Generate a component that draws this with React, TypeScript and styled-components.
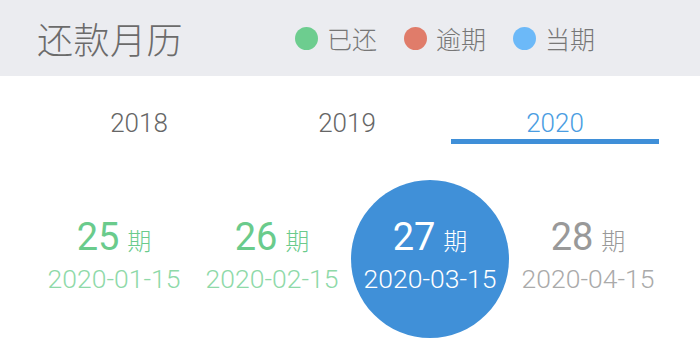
import { createGlobalStyle } from 'styled-components';
import styled from 'styled-components';

type Status = 'paid' | 'overdue' | 'current' | 'future';

const LEGEND: { label: string; color: string }[] = [
  { label: '已还', color: '#6dcd8f' },
  { label: '逾期', color: '#e07c6a' },
  { label: '当期', color: '#6cb9f8' },
];

const YEARS = ['2018', '2019', '2020'];

const TERMS: { term: number; date: string; status: Status }[] = [
  { term: 25, date: '2020-01-15', status: 'paid' },
  { term: 26, date: '2020-02-15', status: 'paid' },
  { term: 27, date: '2020-03-15', status: 'current' },
  { term: 28, date: '2020-04-15', status: 'future' },
];

const numberColor: Record<Status, string> = {
  paid: '#6acb8c',
  overdue: '#e07c6a',
  current: '#ffffff',
  future: '#999999',
};

const dateColor: Record<Status, string> = {
  paid: '#8ed9a8',
  overdue: '#e9a093',
  current: '#ffffff',
  future: '#aaaaaa',
};

function App(): JSX.Element {
  return (
    <>
      <GlobalStyle />
      <Page>
        <Header>
          <Title>还款月历</Title>
          <Legend>
            {LEGEND.map(item => (
              <LegendItem key={item.label}>
                <Dot $color={item.color} />
                <LegendText>{item.label}</LegendText>
              </LegendItem>
            ))}
          </Legend>
        </Header>
        <Tabs>
          {YEARS.map(year => (
            <Tab key={year} $active={year === '2020'}>
              {year}
            </Tab>
          ))}
        </Tabs>
        <Terms>
          {TERMS.map(item => (
            <Term key={item.term} $current={item.status === 'current'}>
              <TermLine $color={numberColor[item.status]}>
                <TermNumber>{item.term}</TermNumber>
                <TermUnit>期</TermUnit>
              </TermLine>
              <TermDate $color={dateColor[item.status]}>{item.date}</TermDate>
            </Term>
          ))}
        </Terms>
      </Page>
    </>
  );
}

export default App;

const GlobalStyle = createGlobalStyle`
  html, body {
    margin: 0;
    padding: 0;
    background: #ffffff;
  }
  body {
    font-family: Roboto, "Noto Sans CJK SC", sans-serif;
  }
`;

const Page = styled.div`
  width: 700px;
  height: 350px;
  overflow: hidden;
  background: #ffffff;
`;

const Header = styled.div`
  height: 76px;
  display: flex;
  align-items: center;
  padding-left: 37px;
  background: #ebecf0;
`;

const Title = styled.h1`
  margin: 0;
  font-family: "Noto Sans CJK SC", sans-serif;
  font-size: 36px;
  font-weight: 300;
  line-height: 40px;
  color: #6b6b6b;
  letter-spacing: 0.5px;
`;

const Legend = styled.div`
  display: flex;
  align-items: center;
  gap: 27px;
  margin-left: 112px;
`;

const LegendItem = styled.div`
  display: flex;
  align-items: center;
  gap: 9px;
`;

const Dot = styled.span<{ $color: string }>`
  width: 23px;
  height: 23px;
  border-radius: 50%;
  background: ${props => props.$color};
`;

const LegendText = styled.span`
  font-family: "Noto Sans CJK SC", sans-serif;
  font-size: 25px;
  font-weight: 300;
  line-height: 30px;
  color: #777777;
`;

const Tabs = styled.div`
  display: grid;
  grid-template-columns: repeat(3, 208px);
  margin-left: 35px;
`;

const Tab = styled.div<{ $active: boolean }>`
  padding: 34px 0 3px;
  text-align: center;
  font-size: 26px;
  font-weight: 300;
  line-height: 26px;
  color: ${props => (props.$active ? '#4a9de2' : '#666666')};
  border-bottom: 5px solid
    ${props => (props.$active ? '#3f8fd8' : 'transparent')};
`;

const Terms = styled.div`
  display: grid;
  grid-template-columns: repeat(4, 158px);
  margin: 36px 0 0 35px;
`;

const Term = styled.div<{ $current: boolean }>`
  height: 158px;
  box-sizing: border-box;
  padding-bottom: 7px;
  display: flex;
  flex-direction: column;
  align-items: center;
  justify-content: center;
  border-radius: 50%;
  background: ${props => (props.$current ? '#4090d8' : 'transparent')};
`;

const TermLine = styled.div<{ $color: string }>`
  display: flex;
  align-items: baseline;
  height: 40px;
  line-height: 40px;
  color: ${props => props.$color};
`;

const TermNumber = styled.span`
  font-size: 38px;
  font-weight: 400;
`;

const TermUnit = styled.span`
  margin-left: 8px;
  font-family: "Noto Sans CJK SC", sans-serif;
  font-size: 24px;
  font-weight: 300;
`;

const TermDate = styled.div<{ $color: string }>`
  margin-top: 7px;
  font-size: 26.5px;
  font-weight: 300;
  line-height: 30px;
  color: ${props => props.$color};
`;
